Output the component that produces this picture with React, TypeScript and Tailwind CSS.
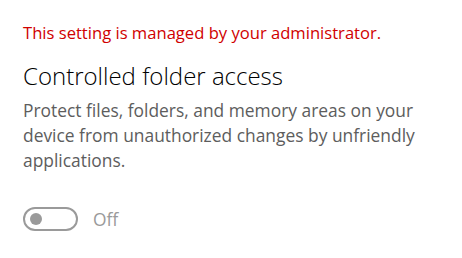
import React from "react";

export default function App() {
  return (
    <div className="w-[462px] h-[258px] bg-white overflow-hidden pl-[23px] pt-[22px]" style={{ fontFamily: '"Open Sans", "Noto Sans", sans-serif' }}>
      <div className="text-[16.6px] leading-[22px] text-[#d00000] whitespace-nowrap">
        This setting is managed by your administrator.
      </div>
      <div className="mt-[16px] text-[24px] leading-[32px] text-black font-[350] whitespace-nowrap">
        Controlled folder access
      </div>
      <p className="mt-[6px] text-[17.4px] leading-[25px] text-[#5d5d5d] whitespace-nowrap">
        Protect files, folders, and memory areas on your
        <br />
        device from unauthorized changes by unfriendly
        <br />
        applications.
      </p>
      <div className="mt-[34px] flex items-center">
        <div className="w-[55px] h-[24px] rounded-full border-2 border-[#9a9a9a] flex items-center pl-[5px]">
          <div className="w-[12px] h-[12px] rounded-full bg-[#9a9a9a]" />
        </div>
        <span className="ml-[15px] text-[17.4px] leading-[24px] text-[#9a9a9a]">Off</span>
      </div>
    </div>
  );
}
